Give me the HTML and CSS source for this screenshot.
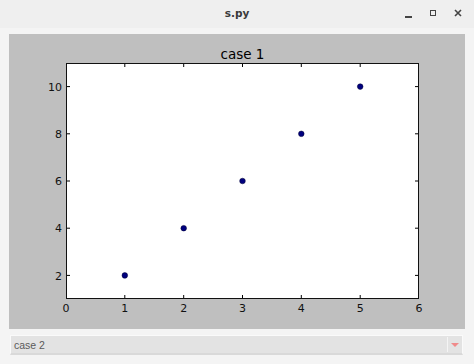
FILE: index.html
```html
<!DOCTYPE html>
<html lang="en">
<head>
    <meta charset="UTF-8">
    <meta name="viewport" content="width=device-width, initial-scale=1.0">
    <title>s.py</title>
    <link rel="stylesheet" href="styles.css">
</head>
<body>
    <div class="window">
        <div class="titlebar">
            <span class="title">s.py</span>
            <div class="controls">
                <span class="ctl min"></span>
                <span class="ctl max"></span>
                <span class="ctl close">
                    <svg width="8" height="8" viewBox="0 0 8 8"><path d="M1 1L7 7M7 1L1 7" stroke="#444" stroke-width="1.6"/></svg>
                </span>
            </div>
        </div>
        <div class="content">
            <div class="figure">
                <svg width="456" height="295" viewBox="0 0 456 295">
                    <rect x="57" y="29" width="353" height="236" fill="#ffffff"/>
                    <text x="233.5" y="25" class="plot-title" text-anchor="middle">case 1</text>
                    <g stroke="#000" stroke-width="1">
                        <!-- x ticks -->
                        <path d="M115.8 265v-4M115.8 29v4M174.7 265v-4M174.7 29v4M233.5 265v-4M233.5 29v4M292.3 265v-4M292.3 29v4M351.2 265v-4M351.2 29v4"/>
                        <!-- y ticks -->
                        <path d="M57 241.4h4M410 241.4h-4M57 194.2h4M410 194.2h-4M57 147h4M410 147h-4M57 99.8h4M410 99.8h-4M57 52.6h4M410 52.6h-4"/>
                    </g>
                    <rect x="57.5" y="29.5" width="352" height="235" fill="none" stroke="#111" stroke-width="1"/>
                    <g fill="#00007f" stroke="#000030" stroke-width="0.5">
                        <circle cx="115.8" cy="241.4" r="2.8"/>
                        <circle cx="174.7" cy="194.2" r="2.8"/>
                        <circle cx="233.5" cy="147" r="2.8"/>
                        <circle cx="292.3" cy="99.8" r="2.8"/>
                        <circle cx="351.2" cy="52.6" r="2.8"/>
                    </g>
                    <g class="tick-label" text-anchor="end">
                        <text x="53" y="245.5">2</text>
                        <text x="53" y="198.3">4</text>
                        <text x="53" y="151.1">6</text>
                        <text x="53" y="103.9">8</text>
                        <text x="53" y="56.7">10</text>
                    </g>
                    <g class="tick-label" text-anchor="middle">
                        <text x="57" y="278">0</text>
                        <text x="115.8" y="278">1</text>
                        <text x="174.7" y="278">2</text>
                        <text x="233.5" y="278">3</text>
                        <text x="292.3" y="278">4</text>
                        <text x="351.2" y="278">5</text>
                        <text x="410" y="278">6</text>
                    </g>
                </svg>
            </div>
            <div class="combo">
                <span class="combo-text">case 2</span>
                <span class="combo-btn"><span class="arrow"></span></span>
            </div>
        </div>
    </div>
</body>
</html>
```

FILE: styles.css
```css
body{
    margin: 0;
    background-color: #f4f4f4;
    font-family: "DejaVu Sans", sans-serif;
}
.window{
    width: 474px;
    height: 364px;
    overflow: hidden;
}
.titlebar{
    height: 28px;
    background-color: #efefef;
    display: flex;
    align-items: center;
    justify-content: center;
    position: relative;
}
.title{
    font-size: 10.5px;
    font-weight: bold;
    color: #3a3a3a;
    margin-top: -2px;
}
.controls{
    position: absolute;
    right: 8px;
    top: 6px;
    display: flex;
    gap: 9px;
}
.ctl{
    width: 16px;
    height: 14px;
    display: flex;
    align-items: center;
    justify-content: center;
}
.min::after{
    content: "";
    width: 7px;
    height: 2px;
    background: #444;
    margin-top: 8px;
}
.max::after{
    content: "";
    width: 4px;
    height: 4px;
    border: 1.5px solid #444;
}
.content{
    padding: 6px 9px 0 9px;
}
.figure{
    height: 295px;
    background-color: #bfbfbf;
}
.figure svg{
    display: block;
}
.plot-title{
    font-family: "DejaVu Sans", sans-serif;
    font-size: 13.5px;
    fill: #000;
}
.tick-label{
    font-family: "DejaVu Sans", sans-serif;
    font-size: 11px;
    fill: #111;
}
.combo{
    margin: 6px 2px 0 1px;
    height: 17px;
    background-color: #e3e3e3;
    border: 1px solid #fafafa;
    border-bottom: 2px solid #d9d9d9;
    display: flex;
    align-items: center;
}
.combo-text{
    flex: 1;
    padding-left: 3px;
    font-family: "Liberation Sans", sans-serif;
    font-size: 10.5px;
    color: #5a5a5a;
}
.combo-btn{
    width: 14px;
    height: 15px;
    border-left: 1px solid #f4f4f4;
    display: flex;
    align-items: center;
    justify-content: center;
}
.arrow{
    width: 0;
    height: 0;
    border-left: 4px solid transparent;
    border-right: 4px solid transparent;
    border-top: 4px solid #f08a8a;
}
```
